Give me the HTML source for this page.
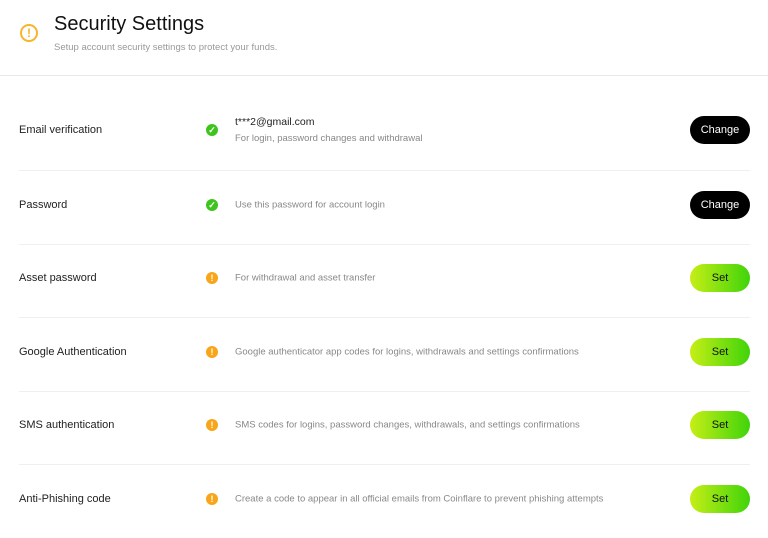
<!DOCTYPE html>
<html><head><style>
body{margin:0;width:768px;height:524px;overflow:hidden;background:#fff;font-family:"Liberation Sans",sans-serif;position:relative}
.hd-ic{position:absolute;left:20px;top:24px;width:18px;height:18px;border:2px solid #f7b52c;border-radius:50%;box-sizing:border-box;color:#f7b52c;font-size:12px;font-weight:bold;text-align:center;line-height:15px}
h1{position:absolute;left:54px;top:13px;margin:0;font-size:20px;font-weight:500;color:#111}
.sub{position:absolute;left:54px;top:42px;font-size:9.5px;color:#999}
.hr{position:absolute;left:0;top:75px;width:768px;height:1px;background:#e8e8e8}
.row{position:absolute;left:19px;width:731px;height:73px;border-bottom:1px solid #efefef}
.row.last{border-bottom:none}
.in{position:absolute;left:0;top:-3px;width:100%;height:100%}
.lbl{position:absolute;left:0;top:50%;transform:translateY(-50%);font-size:11px;color:#222}
.ic{position:absolute;left:187px;top:50%;margin-top:-6px;width:12px;height:12px;border-radius:50%;color:#fff;font-size:9px;font-weight:bold;text-align:center;line-height:12px}
.ok{background:#3ec51d}.warn{background:#f9a51a}
.d{position:absolute;left:216px;top:50%;transform:translateY(-50%);font-size:9.5px;color:#888}
.d b{display:block;font-weight:normal;color:#222;font-size:10.5px;margin-bottom:5px}
.btn{position:absolute;right:0;top:50%;margin-top:-14px;width:60px;height:28px;border-radius:14px;font-size:11px;text-align:center;line-height:28px;font-weight:500}
.ch{background:#000;color:#fff}
.set{background:linear-gradient(90deg,#c6ee16,#3fd40a);color:#111}
</style></head><body>
<div class="hd-ic">!</div>
<h1>Security Settings</h1>
<div class="sub">Setup account security settings to protect your funds.</div>
<div class="hr"></div>
<div class="row" style="top:97px"><div class="in" style="top:-4px"><div class="lbl">Email verification</div><div class="ic ok">✓</div><div class="d"><b>t***2@gmail.com</b>For login, password changes and withdrawal</div><div class="btn ch">Change</div></div></div>
<div class="row" style="top:171px"><div class="in"><div class="lbl">Password</div><div class="ic ok">✓</div><div class="d">Use this password for account login</div><div class="btn ch">Change</div></div></div>
<div class="row" style="top:244px"><div class="in"><div class="lbl">Asset password</div><div class="ic warn">!</div><div class="d">For withdrawal and asset transfer</div><div class="btn set">Set</div></div></div>
<div class="row" style="top:318px"><div class="in"><div class="lbl">Google Authentication</div><div class="ic warn">!</div><div class="d">Google authenticator app codes for logins, withdrawals and settings confirmations</div><div class="btn set">Set</div></div></div>
<div class="row" style="top:391px"><div class="in"><div class="lbl">SMS authentication</div><div class="ic warn">!</div><div class="d">SMS codes for logins, password changes, withdrawals, and settings confirmations</div><div class="btn set">Set</div></div></div>
<div class="row last" style="top:465px"><div class="in"><div class="lbl">Anti-Phishing code</div><div class="ic warn">!</div><div class="d">Create a code to appear in all official emails from Coinflare to prevent phishing attempts</div><div class="btn set">Set</div></div></div>
</body></html>
